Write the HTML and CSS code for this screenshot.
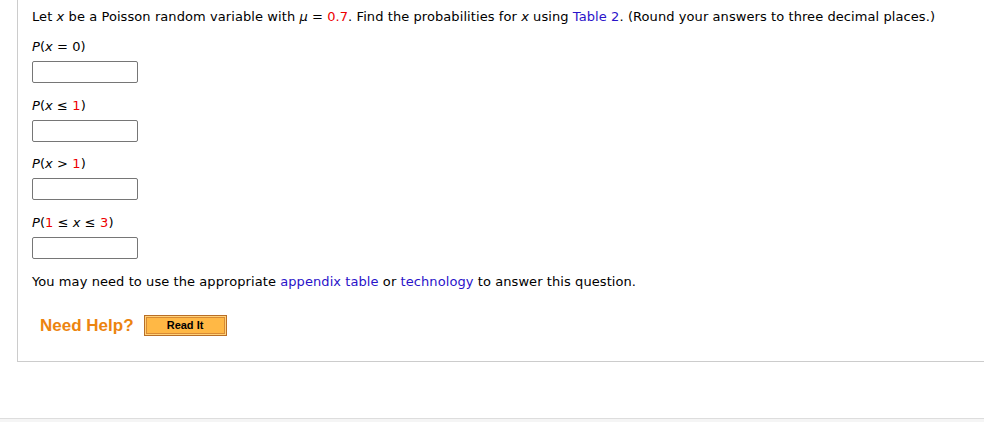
FILE: index.html
```html
<!DOCTYPE html>
<html lang="en">
<head>
  <meta charset="UTF-8" />
  <title>Poisson question</title>
  <link rel="stylesheet" href="styles.css">
</head>
<body>
  <div class="question">
    <p class="prompt">Let <i>x</i> be a Poisson random variable with <i>&mu;</i> = <span class="num">0.7</span>. Find the probabilities for <i>x</i> using <a href="#">Table 2</a>. (Round your answers to three decimal places.)</p>

    <div class="part">
      <div class="label"><i>P</i>(<i>x</i> = 0)</div>
      <input type="text" class="answer">
    </div>
    <div class="part">
      <div class="label"><i>P</i>(<i>x</i> &le; <span class="num">1</span>)</div>
      <input type="text" class="answer">
    </div>
    <div class="part">
      <div class="label"><i>P</i>(<i>x</i> &gt; <span class="num">1</span>)</div>
      <input type="text" class="answer">
    </div>
    <div class="part">
      <div class="label"><i>P</i>(<span class="num">1</span> &le; <i>x</i> &le; <span class="num">3</span>)</div>
      <input type="text" class="answer">
    </div>

    <p class="note">You may need to use the appropriate <a href="#">appendix table</a> or <a href="#">technology</a> to answer this question.</p>

    <div class="help">
      <span class="help-title">Need Help?</span>
      <button class="read-it">Read It</button>
    </div>
  </div>

  <div class="footer"></div>
</body>
</html>
```

FILE: styles.css
```css
* {
  box-sizing: border-box;
  margin: 0;
  padding: 0;
}

body {
  background: #fff;
  font-family: 'DejaVu Sans', Verdana, sans-serif;
  font-size: 13px;
  line-height: 16px;
  letter-spacing: 0.08px;
  color: #000;
  overflow: hidden;
}

.question {
  margin-left: 17px;
  border-left: 1px solid #ccc;
  border-bottom: 1px solid #ccc;
  padding: 9px 0 25px 14px;
}

.prompt {
  margin-bottom: 14px;
}

.num {
  color: #e00;
}

a {
  color: #2a13c9;
  text-decoration: none;
}

.part {
  margin-bottom: 14.7px;
}

.label {
  margin-bottom: 6px;
}

.answer {
  display: block;
  width: 106px;
  height: 22px;
  border: 1px solid #767676;
  border-radius: 2px;
  background: #fff;
}

.note {
  margin-bottom: 25px;
}

.help {
  display: flex;
  align-items: center;
  gap: 10px;
  padding-left: 8px;
  letter-spacing: 0;
}

.help-title {
  font-family: 'Liberation Sans', Arial, sans-serif;
  font-weight: bold;
  font-size: 17px;
  line-height: 21px;
  color: #ec8410;
}

.read-it {
  width: 83px;
  height: 21px;
  background: #ffb845;
  border: 1px solid #b96e26;
  box-shadow: inset 0 0 0 1px #ffd27a, inset 0 0 0 2px #d88a34;
  font-family: 'Liberation Sans', Arial, sans-serif;
  font-weight: bold;
  font-size: 11px;
  color: #000;
}

.footer {
  margin-top: 56px;
  height: 10px;
  border-top: 1px solid #ddd;
  background: #f5f5f5;
}
```
